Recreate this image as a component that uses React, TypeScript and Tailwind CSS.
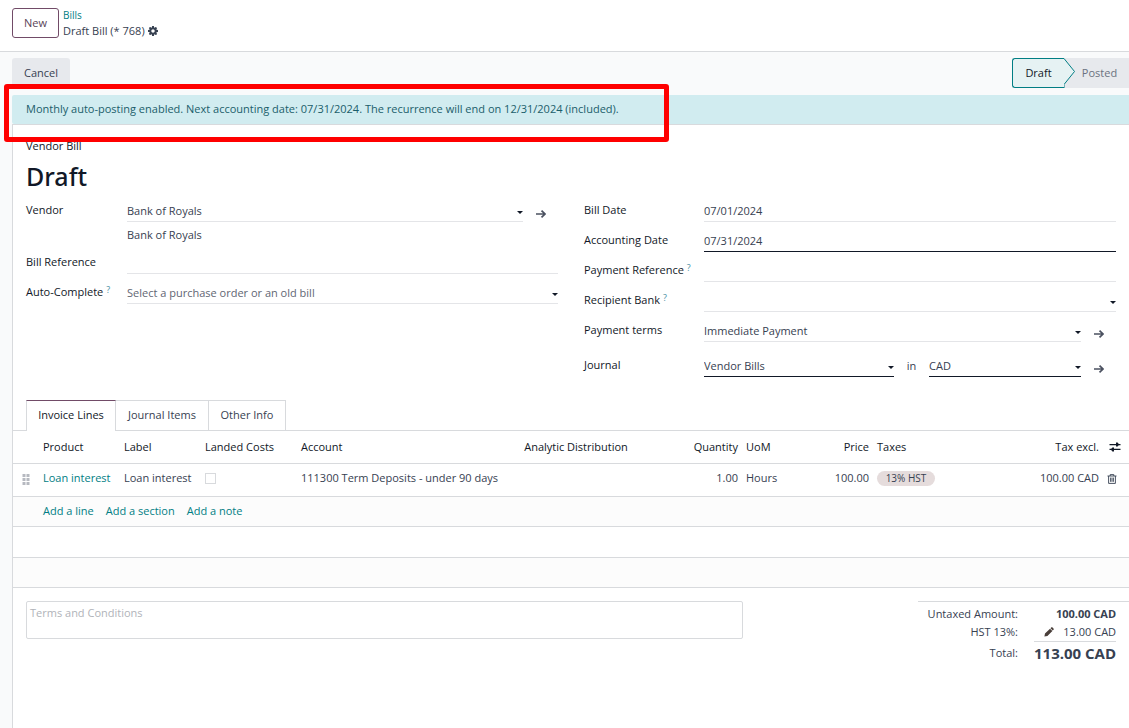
import type { ReactNode } from 'react';

function GearIcon() {
  return (
    <svg viewBox="0 128 1536 1536" className="w-[10px] h-[10px]" fill="currentColor">
      <path d="M1024 896q0-106-75-181t-181-75-181 75-75 181 75 181 181 75 181-75 75-181zm512-109v222q0 12-8 23t-20 13l-185 28q-19 54-39 91 35 50 107 138 10 12 10 25t-9 23q-27 37-99 108t-94 71q-12 0-26-9l-138-108q-44 23-91 38-16 136-29 186-7 28-36 28h-222q-14 0-24.5-8.5t-11.5-21.5l-28-184q-49-16-90-37l-141 107q-10 9-25 9-14 0-25-11-126-114-165-168-7-10-7-23 0-12 8-23 15-21 51-66.5t54-70.5q-27-50-41-99l-183-27q-13-2-21-12.5t-8-23.5v-222q0-12 8-23t19-13l186-28q14-46 39-92-40-57-107-138-10-12-10-24 0-10 9-23 26-36 98.5-107.5t94.5-71.5q13 0 26 10l138 107q44-23 91-38 16-136 29-186 7-28 36-28h222q14 0 24.5 8.5t11.5 21.5l28 184q49 16 90 37l142-107q9-9 24-9 13 0 25 10 129 119 165 170 7 8 7 22 0 12-8 23-15 21-51 66.5t-54 70.5q26 50 41 98l183 28q13 2 21 12.5t8 23.5z" />
    </svg>
  );
}

function ArrowIcon() {
  return (
    <svg viewBox="0 0 10 8" className="w-[10px] h-[8px]" fill="none" stroke="currentColor" strokeWidth="1.7">
      <path d="M0 4h9M5.5 0.6L9 4L5.5 7.4" />
    </svg>
  );
}

function SlidersIcon() {
  return (
    <svg viewBox="0 0 12 10" className="w-[12px] h-[10px]" fill="currentColor">
      <path d="M0.5 2h11v1.2h-11zM0.5 6.8h11V8h-11z" />
      <path d="M7 0.6h1.6l1.6 2-1.6 2H7zM5 5.4H3.4l-1.6 2 1.6 2H5z" />
    </svg>
  );
}

function TrashIcon() {
  return (
    <svg viewBox="0 0 10 10" className="w-[10px] h-[10px]" fill="none" stroke="currentColor">
      <path d="M0.5 2h9M3.2 2V0.6h3.6V2M1.6 2v7.4h6.8V2M3.6 3.6v4.2M5 3.6v4.2M6.4 3.6v4.2" strokeWidth="0.9" />
    </svg>
  );
}

function PencilIcon() {
  return (
    <svg viewBox="0 0 10 10" className="w-[10px] h-[10px]" fill="#4a3f3a">
      <path d="M0.4 9.6l0.6-3L6 1.7l2.4 2.4-5 5zM6.5 1.2l0.9-0.9q0.5-0.3 0.9 0l1.4 1.4q0.3 0.5 0 0.9L8.8 3.5z" />
    </svg>
  );
}

function HandleIcon() {
  return (
    <svg viewBox="0 0 8 12" className="w-[8px] h-[12px]" fill="#b6b9c0">
      <path d="M0.5 0h3v3h-3zM4.5 0h3v3h-3zM0.5 4h3v3h-3zM4.5 4h3v3h-3zM0.5 8h3v3h-3zM4.5 8h3v3h-3z" />
    </svg>
  );
}

type FieldProps = { label: string; id: string; help?: boolean; tall?: boolean; children: ReactNode };

function Field({ label, id, help, tall, children }: FieldProps) {
  return (
    <div className={tall ? 'flex items-end h-[35px]' : 'flex items-end h-[30px]'}>
      <label htmlFor={id} className="shrink-0 h-[26px] leading-[28px] text-[#111827] w-[101px] group-[.right]:w-[120px] flex">
        {label}
        {help && <sup className="ml-[3px] top-[-3px] leading-[30px] text-[9px] text-[#4a90a4]">?</sup>}
      </label>
      <div className="flex flex-1 min-w-0 items-end">{children}</div>
    </div>
  );
}

function TextField({ id, value, dark }: { id: string; value?: string; dark?: boolean }) {
  return (
    <input
      id={id}
      type="text"
      defaultValue={value}
      className={`w-full h-[24px] pt-[2px] border-b outline-none ${dark ? 'border-[#111827]' : 'border-[#e4e5e8]'}`}
    />
  );
}

type SelectProps = { id: string; value?: string; dark?: boolean; muted?: boolean; grow?: string; label?: string };

function SelectField({ id, value = '', dark, muted, grow = 'flex-1', label }: SelectProps) {
  return (
    <div className={`relative min-w-0 ${grow}`}>
      <select
        id={id}
        aria-label={label}
        className={`block w-full h-[24px] pt-[3px] appearance-none border-b outline-none ${
          dark ? 'border-[#111827]' : 'border-[#e4e5e8]'
        } ${muted ? 'text-[#5f6673]' : ''}`}
      >
        <option>{value}</option>
      </select>
      <svg viewBox="0 0 6 3" className="absolute right-0 bottom-[8px] w-[6px] h-[3px] pointer-events-none" fill="#111827">
        <path d="M0 0h6L3 3z" />
      </svg>
    </div>
  );
}

function OpenButton({ label }: { label: string }) {
  return (
    <button aria-label={label} className="w-[35px] h-[16px] shrink-0 flex items-center justify-center text-[#4b5160]">
      <ArrowIcon />
    </button>
  );
}

export default function App() {
  return (
    <div className="min-h-screen flex flex-col bg-[#f9fafb] text-[#374151] text-[11px] leading-[16px] font-['Open_Sans','Noto_Sans',sans-serif]">
      <header className="h-[52px] shrink-0 flex items-start gap-1 px-3 pt-2 bg-white border-b border-[#d8dadd]">
        <button className="h-[30px] w-[47px] rounded-[3px] border border-[#714b67] text-[#5a4357]">New</button>
        <div className="flex flex-col">
          <a href="#bills" className="leading-[14px] text-[10px] text-[#017e84]">Bills</a>
          <div className="flex items-center gap-[3px] leading-[18px]">
            <span>Draft Bill (* 768)</span>
            <button aria-label="Actions"><GearIcon /></button>
          </div>
        </div>
      </header>

      <main className="flex-1 flex flex-col pl-3">
        <div className="flex justify-between pt-[6px] pb-[7px]">
          <button className="h-[30px] w-[58px] rounded-[3px] bg-[#e7e9ed]">Cancel</button>
          <div className="flex h-[30px]">
            <button className="relative w-[52px] rounded-l-[3px] border border-r-0 border-[#017e84] bg-[#e6f2f3] text-[#111827]">
              Draft
              <svg viewBox="0 0 12 30" className="absolute left-full -top-px w-[12px] h-[30px]">
                <path d="M0 0.5L10.5 13L0 26v4z" fill="#e6f2f3" />
                <path d="M0 0.5L10.5 13.5L0 26.5V30" fill="none" stroke="#017e84" />
              </svg>
            </button>
            <button className="w-[65px] pl-[6px] bg-[#e7e9ed] text-[#6b7280]">Posted</button>
          </div>
        </div>

        <div role="alert" className="relative h-[29px] pl-[14px] leading-[28px] rounded-l-[2px] bg-[#d1ecf0] text-[#1b5e6b]">
          Monthly auto-posting enabled. Next accounting date: 07/31/2024. The recurrence will end on 12/31/2024 (included).
          <div className="absolute -left-2 -top-[11px] w-[665px] h-[58px] z-10 rounded-[3px] border-[5px] border-[#ff0000] pointer-events-none" />
        </div>

        <section className="flex-1 bg-white border-l border-t border-[#d8dadd]">
          <div className="px-[13px] pt-[13px]">
            <div className="text-[#111827]">Vendor Bill</div>
            <h1 className="mt-[5px] font-['Noto_Sans',sans-serif] text-[25px] leading-[34px] font-medium text-[#111827]">Draft</h1>

            <div className="grid grid-cols-2 gap-x-[26px] -mt-px">
              <div>
                <Field label="Vendor" id="vendor">
                  <SelectField id="vendor" value="Bank of Royals" />
                  <OpenButton label="Open vendor" />
                </Field>
                <div className="h-[22px] pl-[101px] leading-[26px]">Bank of Royals</div>
                <Field label="Bill Reference" id="bill-reference">
                  <TextField id="bill-reference" />
                </Field>
                <Field label="Auto-Complete" id="auto-complete" help>
                  <SelectField id="auto-complete" value="Select a purchase order or an old bill" muted />
                </Field>
              </div>
              <div className="group right">
                <Field label="Bill Date" id="bill-date">
                  <TextField id="bill-date" value="07/01/2024" />
                </Field>
                <Field label="Accounting Date" id="accounting-date">
                  <TextField id="accounting-date" value="07/31/2024" dark />
                </Field>
                <Field label="Payment Reference" id="payment-reference" help>
                  <TextField id="payment-reference" />
                </Field>
                <Field label="Recipient Bank" id="recipient-bank" help>
                  <SelectField id="recipient-bank" />
                </Field>
                <Field label="Payment terms" id="payment-terms">
                  <SelectField id="payment-terms" value="Immediate Payment" />
                  <OpenButton label="Open payment terms" />
                </Field>
                <Field label="Journal" id="journal" tall>
                  <SelectField id="journal" value="Vendor Bills" dark grow="flex-[5]" />
                  <span className="w-[35px] pb-[3px] text-center">in</span>
                  <SelectField id="currency" value="CAD" dark grow="flex-[4]" label="Currency" />
                  <OpenButton label="Open currency" />
                </Field>
              </div>
            </div>
          </div>

          <div role="tablist" className="flex h-[31px] mt-[23px] pl-[13px] border-b border-[#d8dadd]">
            <button role="tab" aria-selected="true" className="h-[31px] w-[90px] pb-[2px] bg-white border-x border-t border-x-[#d8dadd] border-t-[#714b67] text-[#111827]">
              Invoice Lines
            </button>
            <button role="tab" className="w-[93px] pb-px border-t border-r border-[#d8dadd]">Journal Items</button>
            <button role="tab" className="w-[77px] pb-px border-t border-r border-[#d8dadd]">Other Info</button>
          </div>

          <table className="w-full table-fixed text-left border-collapse whitespace-nowrap">
            <colgroup>
              <col className="w-[26px]" />
              <col className="w-[81px]" />
              <col className="w-[81px]" />
              <col className="w-[96px]" />
              <col className="w-[20%]" />
              <col />
              <col className="w-[61px]" />
              <col className="w-[60px]" />
              <col className="w-[71px]" />
              <col className="w-[142px]" />
              <col className="w-[88px]" />
              <col className="w-[26px]" />
            </colgroup>
            <thead>
              <tr className="h-[32px] border-b border-[#d8dadd] text-[#111827] [&>th]:font-medium [&>th]:px-1 [&>th]:py-0">
                <th />
                <th>Product</th>
                <th>Label</th>
                <th>Landed Costs</th>
                <th>Account</th>
                <th>Analytic Distribution</th>
                <th className="text-right">Quantity</th>
                <th>UoM</th>
                <th className="text-right">Price</th>
                <th>Taxes</th>
                <th className="text-right">Tax excl.</th>
                <th><button aria-label="Optional columns" className="block ml-[2px]"><SlidersIcon /></button></th>
              </tr>
            </thead>
            <tbody>
              <tr className="h-[33px] border-b border-[#d8dadd] [&>td]:px-1 [&>td]:pb-[3px]">
                <td><span className="flex justify-center pt-[3px]"><HandleIcon /></span></td>
                <td><a href="#product" className="text-[#017e84]">Loan interest</a></td>
                <td>Loan interest</td>
                <td>
                  <input type="checkbox" aria-label="Landed Costs" className="block appearance-none w-[11px] h-[11px] mt-px border border-[#d8dadd] bg-white" />
                </td>
                <td>111300 Term Deposits - under 90 days</td>
                <td />
                <td className="text-right">1.00</td>
                <td>Hours</td>
                <td className="text-right">100.00</td>
                <td><span className="block w-[58px] h-[15px] mt-px leading-[15px] rounded-full text-center text-[10px] bg-[#e5dcdc]">13% HST</span></td>
                <td className="text-right">100.00 CAD</td>
                <td><button aria-label="Delete line" className="block pt-[2px]"><TrashIcon /></button></td>
              </tr>
              <tr className="h-[30px] border-b border-[#d8dadd] bg-[#fcfcfc]">
                <td />
                <td colSpan={11} className="px-1">
                  <div className="flex gap-3 text-[#017e84]">
                    <a href="#line">Add a line</a>
                    <a href="#section">Add a section</a>
                    <a href="#note">Add a note</a>
                  </div>
                </td>
              </tr>
              <tr className="h-[31px] border-b border-[#d8dadd]"><td colSpan={12} /></tr>
              <tr className="h-[30px] border-b border-[#d8dadd] bg-[#fcfcfc]"><td colSpan={12} /></tr>
            </tbody>
          </table>

          <div className="flex justify-between items-start pl-[13px] pt-[13px]">
            <textarea
              aria-label="Terms and Conditions"
              placeholder="Terms and Conditions"
              className="block w-[65%] h-[38px] px-[3px] py-[3px] resize-none rounded-[2px] border border-[#d8dadd] placeholder:text-[#b0b3b9]"
            />
            <dl className="w-[211px] grid grid-cols-[100px_1fr] gap-x-4 pr-[13px] pt-[3px] border-t border-[#d8dadd] text-right leading-[18px]">
              <dt>Untaxed Amount:</dt>
              <dd className="font-bold">100.00 CAD</dd>
              <dt>HST 13%:</dt>
              <dd className="flex items-center justify-between pl-[10px]">
                <button aria-label="Edit tax"><PencilIcon /></button>
                13.00 CAD
              </dd>
              <dt className="leading-[24px]">Total:</dt>
              <dd className="border-t border-[#d8dadd] text-[15px] leading-[22px] font-bold whitespace-nowrap">113.00 CAD</dd>
            </dl>
          </div>
        </section>
      </main>
    </div>
  );
}
